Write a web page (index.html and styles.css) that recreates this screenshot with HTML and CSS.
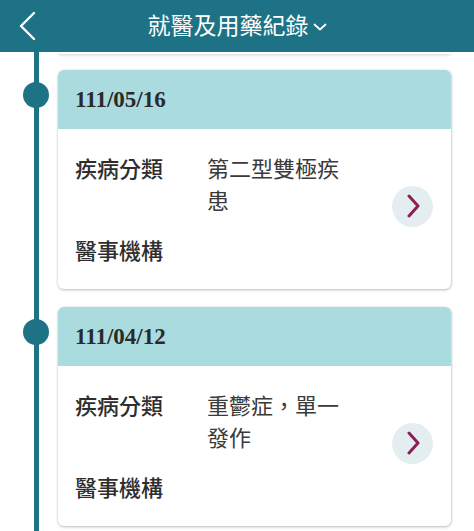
FILE: index.html
```html
<!DOCTYPE html>
<html lang="zh-Hant">
<head>
<meta charset="utf-8">
<link rel="stylesheet" href="styles.css">
</head>
<body>
<header class="topbar">
  <button class="back" aria-label="返回">
    <svg width="18" height="30" viewBox="0 0 18 30"><polyline points="15,2 2,15 15,28" fill="none" stroke="#fff" stroke-width="2.4" stroke-linecap="round" stroke-linejoin="round"/></svg>
  </button>
  <h1 class="title">就醫及用藥紀錄<svg class="caret" width="14" height="8" viewBox="0 0 14 8"><polyline points="1.5,1.5 7,6.5 12.5,1.5" fill="none" stroke="#fff" stroke-width="1.8" stroke-linecap="round" stroke-linejoin="round"/></svg></h1>
  <span></span>
</header>
<main class="timeline">
  <div class="card-tail"></div>
  <section class="card">
    <div class="card-head">111/05/16</div>
    <div class="card-body">
      <div class="rows">
        <div class="row"><span class="label">疾病分類</span><span class="value">第二型雙極疾患</span></div>
        <div class="row"><span class="label">醫事機構</span><span class="value"></span></div>
      </div>
      <span class="go"><svg width="14" height="24" viewBox="0 0 14 24"><polyline points="3,2 12,12 3,22" fill="none" stroke="#8c1f55" stroke-width="3" stroke-linecap="round" stroke-linejoin="round"/></svg></span>
    </div>
  </section>
  <section class="card">
    <div class="card-head">111/04/12</div>
    <div class="card-body">
      <div class="rows">
        <div class="row"><span class="label">疾病分類</span><span class="value">重鬱症，單一發作</span></div>
        <div class="row"><span class="label">醫事機構</span><span class="value"></span></div>
      </div>
      <span class="go"><svg width="14" height="24" viewBox="0 0 14 24"><polyline points="3,2 12,12 3,22" fill="none" stroke="#8c1f55" stroke-width="3" stroke-linecap="round" stroke-linejoin="round"/></svg></span>
    </div>
  </section>
</main>
</body>
</html>
```

FILE: styles.css
```css
html, body {
  margin: 0;
  padding: 0;
  background: #ffffff;
  height: 531px;
  overflow: hidden;
  font-family: "Noto Sans CJK TC", "Noto Sans", sans-serif;
}

.topbar {
  height: 52px;
  background: #1d7385;
  display: grid;
  grid-template-columns: 52px 1fr 52px;
  align-items: center;
  position: relative;
  z-index: 2;
}

.back {
  background: none;
  border: 0;
  padding: 0 0 0 19px;
  margin: 0;
  display: flex;
  align-items: center;
  height: 52px;
  cursor: pointer;
}

.title {
  margin: 0;
  color: #ffffff;
  font-size: 23px;
  font-weight: 400;
  text-align: center;
  line-height: 30px;
  display: flex;
  justify-content: center;
  align-items: center;
  gap: 4px;
  padding-bottom: 4px;
}

.caret {
  margin-top: 6px;
}

.timeline {
  padding: 0 23px 40px 58px;
  display: flex;
  flex-direction: column;
  gap: 18px;
  background: linear-gradient(#1d7385, #1d7385) no-repeat 34px 0 / 5px 100%;
}

.card-tail {
  height: 2px;
  margin-bottom: -2px;
  background: #ffffff;
  border-radius: 0 0 6px 6px;
  box-shadow: 0 1px 3px rgba(0, 0, 0, 0.22);
}

.card {
  position: relative;
  background: #ffffff;
  border-radius: 6px;
  box-shadow: 0 1px 3px rgba(0, 0, 0, 0.25), 1px 0 2px rgba(0, 0, 0, 0.08);
}

.card::before {
  content: "";
  position: absolute;
  left: -35px;
  top: 12px;
  width: 26px;
  height: 26px;
  border-radius: 50%;
  background: #1d7385;
}

.card-head {
  height: 59px;
  background: #a9dbdf;
  border-radius: 6px 6px 0 0;
  display: flex;
  align-items: center;
  padding-left: 17px;
  font-family: "Liberation Serif", "Times New Roman", serif;
  font-weight: 700;
  font-size: 23px;
  color: #2a2a2a;
}

.card-body {
  display: flex;
  align-items: center;
  justify-content: space-between;
  padding: 22px 18px 24px 17px;
}

.rows {
  display: flex;
  flex-direction: column;
  gap: 18px;
}

.row {
  display: flex;
  font-size: 22px;
  line-height: 32px;
  min-height: 32px;
}

.label {
  width: 132px;
  flex: none;
  font-weight: 500;
  color: #2e2e2e;
}

.value {
  width: 150px;
  color: #3a3a3a;
  font-weight: 400;
}

.go {
  width: 41px;
  height: 41px;
  border-radius: 50%;
  background: #e4eef1;
  display: flex;
  align-items: center;
  justify-content: center;
  margin-top: -4px;
}
```
